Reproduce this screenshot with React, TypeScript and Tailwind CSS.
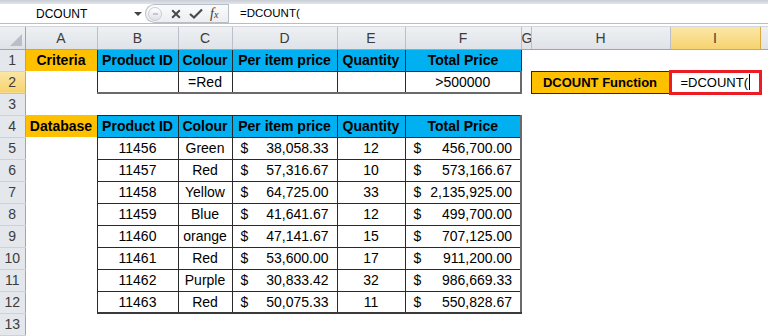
import React from "react";

type Row = {
  id: string;
  colour: string;
  price: string;
  qty: string;
  total: string;
};

const data: Row[] = [
  { id: "11456", colour: "Green", price: "38,058.33", qty: "12", total: "456,700.00" },
  { id: "11457", colour: "Red", price: "57,316.67", qty: "10", total: "573,166.67" },
  { id: "11458", colour: "Yellow", price: "64,725.00", qty: "33", total: "2,135,925.00" },
  { id: "11459", colour: "Blue", price: "41,641.67", qty: "12", total: "499,700.00" },
  { id: "11460", colour: "orange", price: "47,141.67", qty: "15", total: "707,125.00" },
  { id: "11461", colour: "Red", price: "53,600.00", qty: "17", total: "911,200.00" },
  { id: "11462", colour: "Purple", price: "30,833.42", qty: "32", total: "986,669.33" },
  { id: "11463", colour: "Red", price: "50,075.33", qty: "11", total: "550,828.67" },
];

const headers = ["Product ID", "Colour", "Per item price", "Quantity", "Total Price"];

// shared cell styles
const cell = "h-[22px] p-0 whitespace-nowrap";
const bordered = "border border-[#2a2a2a]";
const rowHead =
  "h-[22px] p-0 text-center text-[14px] text-[#3c3c3c] bg-[#e4e7ec] border-b border-b-[#cdd2d9] border-r border-r-[#9da5b0]";
const rowHeadSel =
  "h-[22px] p-0 text-center text-[14px] text-[#3c3c3c] bg-gradient-to-b from-[#fbe6a6] to-[#f6d36e] border-b border-b-[#e9c062] border-r border-r-[#d9a93c]";
const blue = "bg-[#00b0f0] font-bold text-[14px] text-black text-center";
const orange = "bg-[#ffc000] font-bold text-[14px] text-black text-center";

function ColHead({ label, selected }: { label: string; selected?: boolean }) {
  return (
    <th
      className={
        selected
          ? "h-[22px] p-0 font-normal text-[14px] text-[#3c3c3c] text-center bg-gradient-to-b from-[#fbe6a6] to-[#f6d36e] border-r border-r-[#d9a93c] border-b border-b-[#d9a93c] overflow-hidden"
          : "h-[22px] p-0 font-normal text-[14px] text-[#3c3c3c] text-center bg-gradient-to-b from-[#eef0f3] to-[#dfe3e8] border-r border-r-[#b9c0c9] border-b border-b-[#9da5b0] overflow-hidden"
      }
    >
      {label}
    </th>
  );
}

function Money({ value }: { value: string }) {
  return (
    <div className="flex justify-between items-center px-[8px]">
      <span>$</span>
      <span>{value}</span>
    </div>
  );
}

function FormulaBar() {
  return (
    <div className="font-['Liberation_Sans',Arial,sans-serif]">
      <div className="h-[4px] bg-gradient-to-b from-[#c9ced6] to-[#e2e5ea]" />
      <div className="h-[20px] flex bg-white border-b border-[#b8bec6]">
        <div className="w-[145px] flex items-center relative">
          <span className="pl-[36px] text-[12px] text-black">DCOUNT</span>
          <span className="absolute left-[134px] top-[8px] w-0 h-0 border-l-[4px] border-r-[4px] border-t-[4px] border-l-transparent border-r-transparent border-t-[#444]" />
        </div>
        <div className="w-[83px] flex items-center rounded-l-full border border-r-0 border-[#b8bec6] bg-gradient-to-b from-[#fafbfc] to-[#eceef1] pl-[2px]">
          <span className="w-[14px] h-[14px] rounded-full border border-[#c8cdd4] bg-gradient-to-b from-[#ffffff] to-[#dde1e6] flex items-center justify-center">
            <span className="w-[5px] h-[2px] bg-[#c3c8cf]" />
          </span>
          <svg width="10" height="10" viewBox="0 0 10 10" className="ml-[9px]">
            <path d="M1.2 1.2 L8.8 8.8 M8.8 1.2 L1.2 8.8" stroke="#4a4a4a" strokeWidth="2" />
          </svg>
          <svg width="14" height="11" viewBox="0 0 14 11" className="ml-[8px]">
            <path d="M1 6 L5 9.5 L13 1.5" stroke="#4a4a4a" strokeWidth="2.2" fill="none" />
          </svg>
          <span className="ml-[7px] font-['Liberation_Serif',serif] italic text-[14px] text-[#3a3a3a] leading-none">
            f<span className="text-[10px]">x</span>
          </span>
        </div>
        <div className="flex-1 flex items-center border-l border-[#b8bec6] pl-[11px] text-[11.5px] text-black">
          =DCOUNT(
        </div>
      </div>
      <div className="h-[3px] bg-white border-b border-[#d3d7dd]" />
    </div>
  );
}

export default function App() {
  return (
    <div className="w-[768px] h-[336px] overflow-hidden bg-white font-['Liberation_Sans',Arial,sans-serif] text-black">
      <FormulaBar />
      <table className="table-fixed border-collapse w-[768px] text-[14px] leading-none">
        <colgroup>
          <col className="w-[25px]" />
          <col className="w-[72px]" />
          <col className="w-[81px]" />
          <col className="w-[54px]" />
          <col className="w-[105px]" />
          <col className="w-[68px]" />
          <col className="w-[116px]" />
          <col className="w-[10px]" />
          <col className="w-[139px]" />
          <col className="w-[90px]" />
          <col className="w-[8px]" />
        </colgroup>
        <thead>
          <tr>
            <th className="h-[22px] p-0 bg-gradient-to-b from-[#eef0f3] to-[#dfe3e8] border-r border-r-[#9da5b0] border-b border-b-[#9da5b0] relative">
              <span className="absolute right-[3px] bottom-[3px] w-0 h-0 border-l-[12px] border-t-[12px] border-l-transparent border-t-transparent border-b-0 border-r-0 border-b-[#b9bfc8] [border-bottom-width:12px] [border-bottom-style:solid] [border-left-style:solid]" />
            </th>
            <ColHead label="A" />
            <ColHead label="B" />
            <ColHead label="C" />
            <ColHead label="D" />
            <ColHead label="E" />
            <ColHead label="F" />
            <ColHead label="G" />
            <ColHead label="H" />
            <ColHead label="I" selected />
            <ColHead label="" />
          </tr>
        </thead>
        <tbody>
          {/* row 1: criteria header */}
          <tr>
            <td className={rowHead}>1</td>
            <td className={`${cell} ${orange}`}>Criteria</td>
            {headers.map((h) => (
              <td key={h} className={`${cell} ${bordered} ${blue}`}>
                {h}
              </td>
            ))}
            <td className={cell} />
            <td className={cell} />
            <td className={cell} />
            <td className={cell} />
          </tr>

          {/* row 2: criteria values + formula cell */}
          <tr>
            <td className={rowHeadSel}>2</td>
            <td className={cell} />
            <td className={`${cell} ${bordered} border-b-2 border-b-[#6a6a6a]`} />
            <td className={`${cell} ${bordered} border-b-2 border-b-[#6a6a6a] text-center`}>=Red</td>
            <td className={`${cell} ${bordered} border-b-2 border-b-[#6a6a6a]`} />
            <td className={`${cell} ${bordered} border-b-2 border-b-[#6a6a6a]`} />
            <td className={`${cell} ${bordered} border-b-2 border-b-[#6a6a6a] border-r-2 border-r-[#6a6a6a] text-center`}>
              &gt;500000
            </td>
            <td className={cell} />
            <td className={`${cell} ${bordered} ${orange}`}>
              <span className="text-[13px]">DCOUNT Function</span>
            </td>
            <td className={`${cell} border-[3px] border-[#ec1c24]`}>
              <div className="flex items-center pl-[9px] text-[13px]">
                <span>=DCOUNT(</span>
                <span className="w-px h-[16px] bg-black ml-[1px]" />
              </div>
            </td>
            <td className={cell} />
          </tr>

          {/* row 3: blank */}
          <tr>
            <td className={rowHead}>3</td>
            <td className={cell} colSpan={10} />
          </tr>

          {/* row 4: database header */}
          <tr>
            <td className={rowHead}>4</td>
            <td className={`${cell} ${orange}`}>Database</td>
            {headers.map((h, i) => (
              <td
                key={h}
                className={
                  i === 4
                    ? `${cell} ${bordered} ${blue} border-r-2 border-r-[#6a6a6a]`
                    : `${cell} ${bordered} ${blue}`
                }
              >
                {h}
              </td>
            ))}
            <td className={cell} colSpan={4} />
          </tr>

          {/* rows 5-12: data */}
          {data.map((r, i) => {
            const last = i === data.length - 1;
            const b = last ? `${bordered} border-b-2 border-b-[#3a3a3a]` : bordered;
            return (
              <tr key={r.id}>
                <td className={rowHead}>{i + 5}</td>
                <td className={cell} />
                <td className={`${cell} ${b} text-center`}>{r.id}</td>
                <td className={`${cell} ${b} text-center`}>{r.colour}</td>
                <td className={`${cell} ${b}`}>
                  <Money value={r.price} />
                </td>
                <td className={`${cell} ${b} text-center`}>{r.qty}</td>
                <td className={`${cell} ${b} border-r-2 border-r-[#6a6a6a]`}>
                  <Money value={r.total} />
                </td>
                <td className={cell} colSpan={4} />
              </tr>
            );
          })}

          {/* row 13 */}
          <tr>
            <td className={rowHead}>13</td>
            <td className={cell} colSpan={10} />
          </tr>
        </tbody>
      </table>
    </div>
  );
}
